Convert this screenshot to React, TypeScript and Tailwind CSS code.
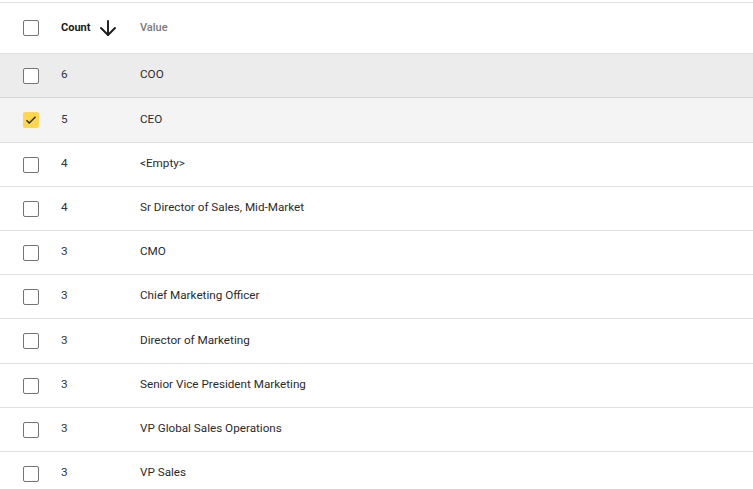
import { ArrowDown } from 'lucide-react';

const rows = [
  { count: 6, value: 'COO', h: 'h-[44px]', bg: 'bg-[#ececec]' },
  { count: 5, value: 'CEO', h: 'h-[45px]', bg: 'bg-[#f4f4f4]', checked: true },
  { count: 4, value: '<Empty>', h: 'h-[44px]', bg: 'bg-white' },
  { count: 4, value: 'Sr Director of Sales, Mid-Market', h: 'h-[44px]', bg: 'bg-white' },
  { count: 3, value: 'CMO', h: 'h-[44px]', bg: 'bg-white' },
  { count: 3, value: 'Chief Marketing Officer', h: 'h-[44px]', bg: 'bg-white' },
  { count: 3, value: 'Director of Marketing', h: 'h-[45px]', bg: 'bg-white' },
  { count: 3, value: 'Senior Vice President Marketing', h: 'h-[44px]', bg: 'bg-white' },
  { count: 3, value: 'VP Global Sales Operations', h: 'h-[44px]', bg: 'bg-white' },
  { count: 3, value: 'VP Sales', h: 'h-[44px]', bg: 'bg-white' },
];

function Checkbox({ checked }: { checked?: boolean }) {
  if (checked) {
    return (
      <div className="w-4 h-4 rounded-[2px] bg-[#fdd74f] flex items-center justify-center">
        <svg width="12" height="12" viewBox="0 0 12 12" fill="none">
          <path d="M1.5 6.2 4.3 9 10.5 2.8" stroke="#2a2a2a" strokeWidth="1.4" />
        </svg>
      </div>
    );
  }
  return <div className="w-4 h-4 rounded-[2px] border-[1.5px] border-[#747474] bg-white" />;
}

export default function App() {
  return (
    <div className="w-[753px] h-[489px] overflow-hidden bg-white pt-[2px] font-['Roboto',sans-serif] text-[11.7px] text-[#333]">
      <div className="h-[52px] border-t border-b border-[#e0e0e0] flex items-center">
        <div className="w-[61px] pl-[23px]">
          <Checkbox />
        </div>
        <div className="w-[79px] flex items-center">
          <span className="text-[11px] font-bold text-[#1b1b1b]">Count</span>
          <ArrowDown className="ml-[6px] text-[#1b1b1b]" size={24} strokeWidth={1.9} />
        </div>
        <span className="text-[11px] font-medium text-[#7a7a7a]">Value</span>
      </div>
      {rows.map((r, i) => (
        <div
          key={i}
          className={`${r.h} ${r.bg} border-b ${i < 1 ? 'border-[#d6d6d6]' : 'border-[#e0e0e0]'} flex items-center`}
        >
          <div className="w-[61px] pl-[23px]">
            <Checkbox checked={r.checked} />
          </div>
          <div className="w-[79px] pb-[1px] text-[#2e3440]">{r.count}</div>
          <div className="pb-[1px] text-[#2b2b2b]">{r.value}</div>
        </div>
      ))}
    </div>
  );
}
